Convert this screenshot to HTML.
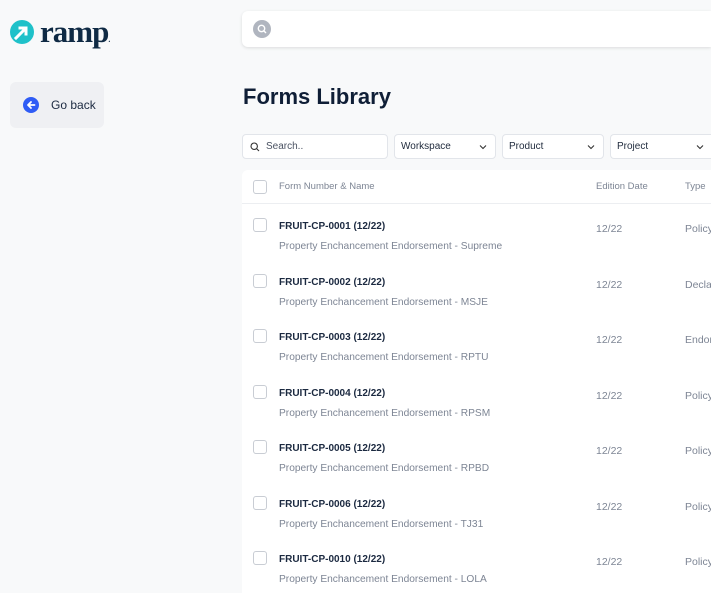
<!DOCTYPE html>
<html><head><meta charset="utf-8">
<style>
*{box-sizing:border-box;margin:0;padding:0}
html,body{width:711px;height:593px;overflow:hidden}
body{background:#f8f9fa;font-family:"Liberation Sans",sans-serif;position:relative}
.logo{position:absolute;left:10px;top:16px;display:flex;align-items:center}
.logo span{font-family:"Liberation Serif",serif;font-weight:bold;font-size:31px;color:#0f2a44;margin-left:6px;letter-spacing:-1px;line-height:1}
.back{position:absolute;left:10px;top:82px;width:94px;height:46px;background:#eff0f3;border-radius:6px}
.back .c{position:absolute;left:13px;top:15px;width:16px;height:16px;border-radius:50%;background:#2f5cf5}
.back .t{position:absolute;left:41px;top:16px;font-size:12px;color:#1b2940}
.topbar{position:absolute;left:242px;top:11px;width:469px;height:36px;background:#fff;border-radius:6px 0 0 6px;box-shadow:0 1px 3px rgba(0,0,0,.12)}
.topbar .s{position:absolute;left:11px;top:9px;width:18px;height:18px;border-radius:50%;background:#b0b5bf}
h1{position:absolute;left:243px;top:84px;font-size:22px;font-weight:bold;color:#0f1e36}
.f{position:absolute;top:134px;height:25px;background:#fff;border:1px solid #e2e5ea;border-radius:4px;font-size:10px;color:#1f2a3c;padding:6px 0 0 6px;overflow:hidden}
.f svg.ch{position:absolute;right:8px;top:9px}
.tbl{position:absolute;left:242px;top:170px;width:469px;height:423px;background:#fff;border-radius:6px 0 0 0;overflow:hidden}
.hd{position:absolute;left:0;top:0;width:100%;height:34px;border-bottom:1px solid #eceef1;font-size:9.5px;color:#7d8594}
.cb{position:absolute;width:14px;height:14px;border:1.5px solid #c9cdd4;border-radius:3px;background:#fff}
.row{position:absolute;left:0;width:100%;height:55px}
.row .a{position:absolute;left:37px;top:1px;font-size:10px;color:#1b2940;font-weight:bold}
.row .b{position:absolute;left:37px;top:21px;font-size:10.2px;color:#7d8594}
.row .d{position:absolute;left:354px;top:3px;font-size:10.5px;color:#7d8594}
.row .e{position:absolute;left:443px;top:3px;font-size:10.5px;color:#7d8594;white-space:nowrap}
</style></head><body>
<div class="logo">
<svg width="24" height="24" viewBox="0 0 24 24"><circle cx="12" cy="12" r="12" fill="#1fc1c9"/><path d="M6 18 L15 9 M10 8 H16 V14" stroke="#fff" stroke-width="3" fill="none" stroke-linecap="square"/></svg>
<span>ramp<small style="font-size:8px">.</small></span></div>
<div class="back"><div class="c"><svg width="16" height="16" viewBox="0 0 16 16"><path d="M11.5 8H5 M8 5 L5 8 L8 11" stroke="#fff" stroke-width="1.8" fill="none" stroke-linecap="round" stroke-linejoin="round"/></svg></div><div class="t">Go back</div></div>
<div class="topbar"><div class="s"><svg width="18" height="18" viewBox="0 0 18 18"><circle cx="8.5" cy="8.5" r="3.2" stroke="#fff" stroke-width="1.4" fill="none"/><path d="M11 11 L13 13" stroke="#fff" stroke-width="1.4"/></svg></div></div>
<h1>Forms Library</h1>
<div class="f" style="left:242px;width:146px;padding-left:23px;color:#4a5262"><svg style="position:absolute;left:7px;top:7px" width="10" height="10" viewBox="0 0 10 10"><circle cx="4.2" cy="4.2" r="3.2" stroke="#333" stroke-width="1.1" fill="none"/><path d="M6.6 6.6 L9 9" stroke="#333" stroke-width="1.1"/></svg>Search..</div>
<div class="f" style="left:394px;width:102px">Workspace<svg class="ch" width="8" height="6" viewBox="0 0 8 6"><path d="M1 1.5 L4 4.5 L7 1.5" stroke="#333" stroke-width="1.1" fill="none"/></svg></div>
<div class="f" style="left:502px;width:102px">Product<svg class="ch" width="8" height="6" viewBox="0 0 8 6"><path d="M1 1.5 L4 4.5 L7 1.5" stroke="#333" stroke-width="1.1" fill="none"/></svg></div>
<div class="f" style="left:610px;width:101px;border-right:none;border-radius:4px 0 0 4px">Project<svg class="ch" style="right:7px" width="8" height="6" viewBox="0 0 8 6"><path d="M1 1.5 L4 4.5 L7 1.5" stroke="#333" stroke-width="1.1" fill="none"/></svg></div>
<div class="tbl">
<div class="hd"><div class="cb" style="left:11px;top:10px"></div><span style="position:absolute;left:37px;top:11px">Form Number &amp; Name</span><span style="position:absolute;left:354px;top:11px">Edition Date</span><span style="position:absolute;left:443px;top:11px">Type</span></div>
<div class="row" style="top:50px"><div class="cb" style="left:11px;top:-2px"></div><div class="a">FRUIT-CP-0001 (12/22)</div><div class="b">Property Enchancement Endorsement - Supreme</div><div class="d">12/22</div><div class="e">Policy</div></div>
<div class="row" style="top:105.5px"><div class="cb" style="left:11px;top:-2px"></div><div class="a">FRUIT-CP-0002 (12/22)</div><div class="b">Property Enchancement Endorsement - MSJE</div><div class="d">12/22</div><div class="e">Declaration</div></div>
<div class="row" style="top:161px"><div class="cb" style="left:11px;top:-2px"></div><div class="a">FRUIT-CP-0003 (12/22)</div><div class="b">Property Enchancement Endorsement - RPTU</div><div class="d">12/22</div><div class="e">Endorsement</div></div>
<div class="row" style="top:216.5px"><div class="cb" style="left:11px;top:-2px"></div><div class="a">FRUIT-CP-0004 (12/22)</div><div class="b">Property Enchancement Endorsement - RPSM</div><div class="d">12/22</div><div class="e">Policy</div></div>
<div class="row" style="top:272px"><div class="cb" style="left:11px;top:-2px"></div><div class="a">FRUIT-CP-0005 (12/22)</div><div class="b">Property Enchancement Endorsement - RPBD</div><div class="d">12/22</div><div class="e">Policy</div></div>
<div class="row" style="top:327.5px"><div class="cb" style="left:11px;top:-2px"></div><div class="a">FRUIT-CP-0006 (12/22)</div><div class="b">Property Enchancement Endorsement - TJ31</div><div class="d">12/22</div><div class="e">Policy</div></div>
<div class="row" style="top:383px"><div class="cb" style="left:11px;top:-2px"></div><div class="a">FRUIT-CP-0010 (12/22)</div><div class="b">Property Enchancement Endorsement - LOLA</div><div class="d">12/22</div><div class="e">Policy</div></div>
</div>
</body></html>
